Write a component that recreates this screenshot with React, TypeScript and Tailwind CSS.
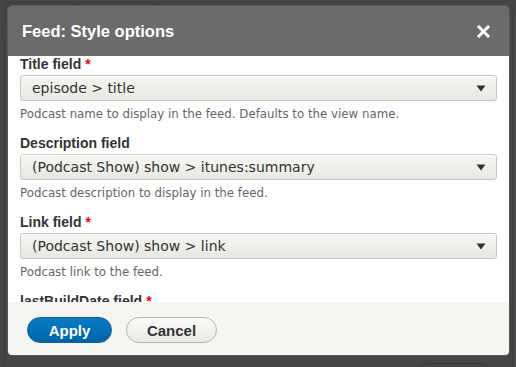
import { ReactNode } from "react";

function Field({ label, required, value, help, first }: { label: string; required?: boolean; value: string; help: string; first?: boolean }) {
  return (
    <div className={first ? "-mt-px" : "mt-[11px]"}>
      <div className="h-[18px] font-['Liberation_Sans',sans-serif] text-[14px] leading-[18px] font-bold text-[#333]">
        {label}
        {required && <span className="ml-[4px] text-[#e00]">*</span>}
      </div>
      <div className="mt-[2px] flex h-[26px] items-center justify-between rounded-[3px] border border-[#c7c7c2] bg-gradient-to-b from-[#f6f6f2] to-[#e8e8e3] pl-[11px] pr-[10px] text-[14px] text-[#333] shadow-[inset_0_1px_0_#fff]">
        <span>{value}</span>
        <svg width="10" height="7" viewBox="0 0 10 7">
          <path d="M0.5 0.5 H9.5 L5 6.5 Z" fill="#333" />
        </svg>
      </div>
      {help && <div className="mt-[5px] text-[11.8px] leading-[17px] text-[#666]">{help}</div>}
    </div>
  );
}

function Button({ children, primary }: { children: ReactNode; primary?: boolean }) {
  return (
    <button
      className={
        primary
          ? "h-[26px] w-[85px] rounded-full border border-[#1e5c90] bg-gradient-to-b from-[#0a7ac6] to-[#0065aa] font-['Liberation_Sans',sans-serif] text-[15px] leading-none font-bold text-white"
          : "h-[26px] w-[91px] rounded-full border border-[#b8b8b0] bg-gradient-to-b from-[#fbfbf8] to-[#e9e9e4] font-['Liberation_Sans',sans-serif] text-[15px] leading-none font-bold text-[#333]"
      }
    >
      {children}
    </button>
  );
}

export default function App() {
  return (
    <div className="relative h-[367px] w-[516px] overflow-hidden bg-[#454545] font-['DejaVu_Sans',sans-serif]">
      {/* page behind the overlay */}
      <div className="absolute left-[5px] top-[2px] h-[20px] w-[72px] rounded-t-[4px] border border-[#3a3a3a]" />
      <div className="absolute left-[78px] top-[2px] h-[20px] w-[82px] rounded-t-[4px] border border-[#3a3a3a]" />
      <div className="absolute left-[4px] top-[40px] h-[330px] w-px bg-[#3c3c3c]" />
      <div className="absolute left-[512px] top-[10px] h-[360px] w-px bg-[#3c3c3c]" />
      <div className="absolute left-[418px] top-[363px] h-[20px] w-[72px] rounded-[10px] border border-[#383838]" />

      <div className="absolute left-[7px] top-[5px] flex h-[351px] w-[503px] flex-col overflow-hidden rounded-[5px] border border-[#5a5a5a]">
        <div className="flex h-[50px] shrink-0 items-center justify-between bg-[#6b6b6b] pl-[14px] pr-[19px]">
          <span className="font-['Liberation_Sans',sans-serif] text-[16.5px] font-bold text-white">Feed: Style options</span>
          <svg width="13" height="13" viewBox="0 0 13 13">
            <path d="M2 2 L11 11 M11 2 L2 11" stroke="#fff" strokeWidth="3" strokeLinecap="square" />
          </svg>
        </div>

        <div className="h-[246px] shrink-0 overflow-hidden bg-white px-[12px]">
          <Field first label="Title field" required value="episode > title" help="Podcast name to display in the feed. Defaults to the view name." />
          <Field label="Description field" value="(Podcast Show) show > itunes:summary" help="Podcast description to display in the feed." />
          <Field label="Link field" required value="(Podcast Show) show > link" help="Podcast link to the feed." />
          <Field label="lastBuildDate field" required value="(Podcast Show) show > changed" help="" />
        </div>

        <div className="flex flex-1 items-start gap-[14px] bg-[#f5f5f2] pl-[19px] pt-[15px]">
          <Button primary>Apply</Button>
          <Button>Cancel</Button>
        </div>
      </div>
    </div>
  );
}
